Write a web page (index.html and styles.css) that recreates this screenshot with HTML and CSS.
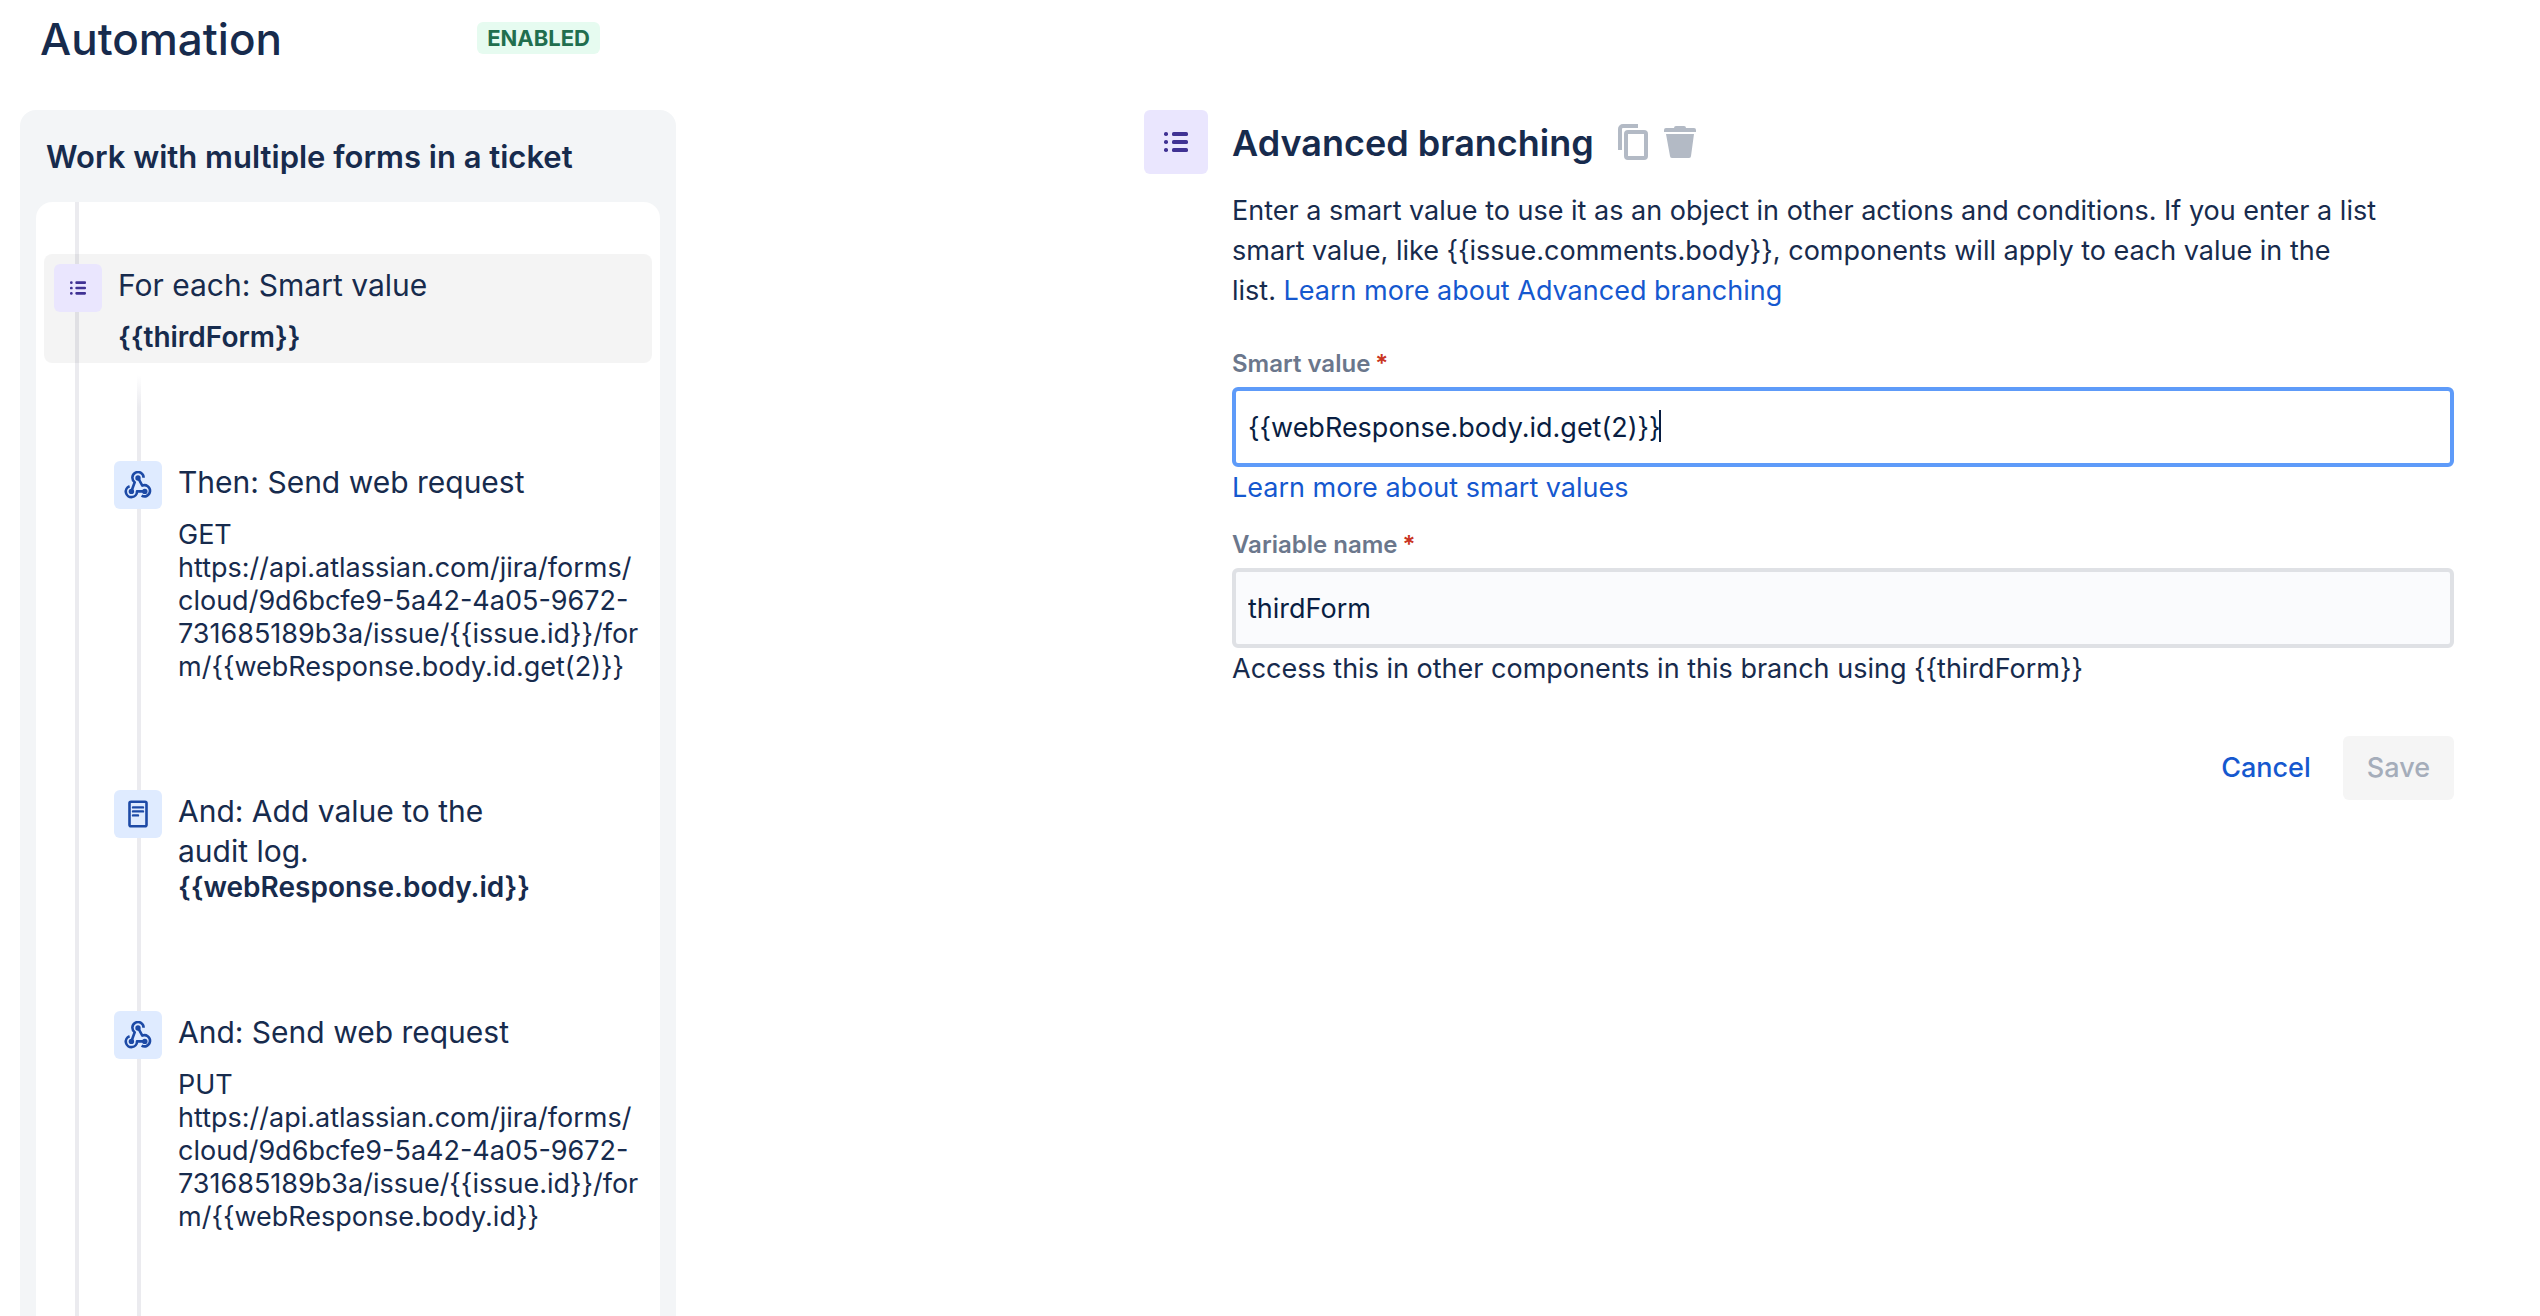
FILE: index.html
```html
<!DOCTYPE html>
<html lang="en">
<head>
<meta charset="utf-8">
<title>Automation</title>
<link rel="stylesheet" href="styles.css">
</head>
<body>
<svg class="sprite" aria-hidden="true">
  <symbol id="icon-list" viewBox="0 0 24 20">
    <g fill="currentColor">
      <rect x="0" y="0" width="4" height="4" rx="1.8"/><rect x="8" y="0" width="16" height="4" rx="1.6"/>
      <rect x="0" y="8" width="4" height="4" rx="1.8"/><rect x="8" y="8" width="16" height="4" rx="1.6"/>
      <rect x="0" y="16" width="4" height="4" rx="1.8"/><rect x="8" y="16" width="16" height="4" rx="1.6"/>
    </g>
  </symbol>
  <symbol id="icon-webhook" viewBox="0 0 28 28">
    <g fill="none" stroke="currentColor" stroke-width="2.6" stroke-linecap="butt" stroke-linejoin="round">
      <path d="M19.6 6.7A5.6 5.6 0 1 0 10.7 11.2L7.6 19.8"/>
      <path d="M14.2 7.2L18.3 14.6A5.6 5.6 0 1 1 17.6 24.6"/>
      <path d="M5.6 15.2A5.6 5.6 0 1 0 13 20.4L21 20.4"/>
    </g>
    <g fill="currentColor"><circle cx="14" cy="7" r="2.7"/><circle cx="7.4" cy="20.4" r="2.7"/><circle cx="20.8" cy="20.4" r="2.7"/></g>
  </symbol>
  <symbol id="icon-log" viewBox="0 0 28 28">
    <rect x="5.5" y="1.8" width="17" height="24.4" rx="1.5" fill="none" stroke="currentColor" stroke-width="2.6"/>
    <path d="M9 7.4h10M9 11.4h10M9 15.4h5" fill="none" stroke="currentColor" stroke-width="2.4" stroke-linecap="round"/>
  </symbol>
</svg>

<header class="page-header">
  <h1 class="page-title">Automation</h1>
  <span class="badge">ENABLED</span>
</header>

<div class="workspace">
  <aside class="rule">
    <h2 class="rule-name">Work with multiple forms in a ticket</h2>
    <div class="rule-body">
      <div class="step step-selected">
        <span class="step-icon branching"><svg class="glyph-s"><use href="#icon-list"/></svg></span>
        <div class="step-text">
          <h3 class="step-title">For each: Smart value</h3>
          <p class="step-detail strong">{{thirdForm}}</p>
        </div>
      </div>
      <div class="branch">
        <div class="step">
          <span class="step-icon action"><svg class="glyph-m"><use href="#icon-webhook"/></svg></span>
          <div class="step-text">
            <h3 class="step-title">Then: Send web request</h3>
            <p class="step-detail">GET<br>https://api.atlassian.com/jira/forms/cloud/9d6bcfe9-5a42-4a05-9672-731685189b3a/issue/{{issue.id}}/form/{{webResponse.body.id.get(2)}}</p>
          </div>
        </div>
        <div class="step">
          <span class="step-icon action"><svg class="glyph-m"><use href="#icon-log"/></svg></span>
          <div class="step-text tight">
            <h3 class="step-title">And: Add value to the audit log.</h3>
            <p class="step-detail strong">{{webResponse.body.id}}</p>
          </div>
        </div>
        <div class="step">
          <span class="step-icon action"><svg class="glyph-m"><use href="#icon-webhook"/></svg></span>
          <div class="step-text">
            <h3 class="step-title">And: Send web request</h3>
            <p class="step-detail">PUT<br>https://api.atlassian.com/jira/forms/cloud/9d6bcfe9-5a42-4a05-9672-731685189b3a/issue/{{issue.id}}/form/{{webResponse.body.id}}</p>
          </div>
        </div>
      </div>
    </div>
  </aside>

  <main class="editor">
    <span class="editor-icon branching"><svg class="glyph-l"><use href="#icon-list"/></svg></span>
    <div class="editor-content">
      <div class="editor-head">
        <h2 class="editor-title">Advanced branching</h2>
        <button class="icon-button" type="button" aria-label="Duplicate">
          <svg class="glyph-tool" viewBox="0 0 32 36"><path d="M3 26V5a3 3 0 0 1 3-3h15" fill="none" stroke="currentColor" stroke-width="4"/><rect x="9" y="8" width="20" height="26" rx="2" fill="none" stroke="currentColor" stroke-width="4"/></svg>
        </button>
        <button class="icon-button" type="button" aria-label="Delete">
          <svg class="glyph-tool" viewBox="0 0 32 36"><g fill="currentColor"><path d="M0 8V6a2 2 0 0 1 2-2h8a2 2 0 0 1 2-2h8a2 2 0 0 1 2 2h8a2 2 0 0 1 2 2v2z"/><path d="M2 10h28l-3 22a2 2 0 0 1-2 2H8a2 2 0 0 1-2-2z"/></g></svg>
        </button>
      </div>
      <p class="editor-copy">Enter a smart value to use it as an object in other actions and conditions. If you enter a list smart value, like {{issue.comments.body}}, components will apply to each value in the list.&nbsp;<a class="link" href="#branching">Learn more about Advanced branching</a></p>
      <form class="fields">
        <div class="field">
          <label class="label" for="smart-value">Smart value<span class="required">*</span></label>
          <div class="control">
            <input class="input focused" id="smart-value" type="text" value="{{webResponse.body.id.get(2)}}">
            <span class="caret"></span>
          </div>
          <p class="help"><a class="link" href="#smart-values">Learn more about smart values</a></p>
        </div>
        <div class="field">
          <label class="label" for="variable-name">Variable name<span class="required">*</span></label>
          <div class="control">
            <input class="input" id="variable-name" type="text" value="thirdForm">
          </div>
          <p class="help">Access this in other components in this branch using {{thirdForm}}</p>
        </div>
        <div class="actions">
          <button class="button cancel" type="button">Cancel</button>
          <button class="button save" type="submit" disabled>Save</button>
        </div>
      </form>
    </div>
  </main>
</div>
</body>
</html>
```
FILE: styles.css
```css
* { box-sizing: border-box; }

body {
  margin: 0;
  min-height: 100vh;
  display: flex;
  flex-direction: column;
  background: #fff;
  color: #172b4d;
  font: 400 27px/40px Inter, "Liberation Sans", sans-serif;
}

h1, h2, h3, p { margin: 0; }

.sprite { display: none; }

.page-header {
  display: flex;
  justify-content: space-between;
  align-items: flex-start;
  width: 600px;
  height: 110px;
  padding: 15px 0 0 40px;
}

.page-title { font-size: 44px; line-height: 48px; font-weight: 500; }

.badge {
  margin-top: 7px;
  padding: 0 10px;
  border-radius: 6px;
  background: #e6fbf0;
  color: #216e4e;
  font-size: 22px;
  line-height: 32px;
  font-weight: 700;
}

.workspace {
  flex: 1;
  display: flex;
  justify-content: space-between;
  gap: 48px;
  padding: 0 86px 0 20px;
}

.rule {
  flex: 0 0 656px;
  display: flex;
  flex-direction: column;
  padding: 28px 16px 0;
  border-radius: 16px 16px 0 0;
  background: #f3f5f7;
}

.rule-name {
  padding: 0 10px 26px;
  font-size: 31px;
  line-height: 38px;
  font-weight: 600;
}

.rule-body {
  flex: 1;
  display: flex;
  flex-direction: column;
  padding: 52px 8px 0;
  border-radius: 16px 16px 0 0;
  background: linear-gradient(#ebebef, #ebebef) 39px 0 / 4px 100% no-repeat #fff;
}

.step { display: flex; align-items: flex-start; gap: 16px; }

.step-selected {
  padding: 10px 10px 9px;
  border-radius: 8px;
  background: rgba(0, 0, 0, .043);
}

.step-icon, .editor-icon {
  flex: none;
  display: flex;
  align-items: center;
  justify-content: center;
}

.step-icon { width: 48px; height: 48px; border-radius: 6px; }
.editor-icon { width: 64px; height: 64px; border-radius: 6px; }

.branching { background: #eae6fe; color: #403294; }
.action { background: #dfebff; color: #1d4aa6; }

.glyph-s { width: 16px; height: 14px; }
.glyph-m { width: 28px; height: 28px; }
.glyph-l { width: 24px; height: 20px; }

.step-text {
  flex: 1;
  min-width: 0;
  display: flex;
  flex-direction: column;
  gap: 16px;
  padding: 1px 8px 0 0;
}

.tight { gap: 0; }

.step-title { max-width: 360px; font-size: 30px; line-height: 40px; font-weight: 400; }

.step-detail { line-height: 33px; overflow-wrap: anywhere; }

.strong { font-size: 28px; font-weight: 600; }

.branch {
  flex: 1;
  display: flex;
  flex-direction: column;
  gap: 107px;
  margin: 12px 0 0 70px;
  padding-top: 86px;
  padding-bottom: 48px;
  background: linear-gradient(transparent, #ebebef 32px) 23px 0 / 4px 100% no-repeat;
}

.editor {
  flex: 0 1 1310px;
  display: flex;
  align-items: flex-start;
  gap: 24px;
}

.editor-content { flex: 1; min-width: 0; }

.editor-head { display: flex; align-items: center; gap: 15px; height: 64px; }

.editor-title { padding: 2px 8px 0 0; font-size: 36px; line-height: 44px; font-weight: 600; }

.icon-button {
  display: flex;
  padding: 0;
  border: 0;
  background: none;
  color: #b3bac5;
}

.glyph-tool { width: 32px; height: 36px; }

.editor-copy { margin-top: 17px; }

.link { color: #1558cf; text-decoration: none; }

.fields { display: flex; flex-direction: column; gap: 21px; margin-top: 37px; }

.label {
  display: block;
  margin-bottom: 7px;
  color: #6b778c;
  font-size: 24px;
  line-height: 32px;
  font-weight: 600;
}

.required { margin-left: 5px; color: #ca3521; }

.control { position: relative; }

.input {
  display: block;
  width: 100%;
  height: 80px;
  padding: 0 12px;
  border: 4px solid #dfe1e5;
  border-radius: 6px;
  background: #fafbfd;
  color: #091e42;
  font: inherit;
}

.focused { border-color: #5e9bf9; background: #fff; outline: 0; }

.caret {
  position: absolute;
  left: 427px;
  top: 23px;
  width: 2px;
  height: 32px;
  background: #091e42;
}

.help { margin-top: 1px; }

.actions { display: flex; justify-content: flex-end; gap: 8px; margin-top: 26px; }

.button {
  height: 64px;
  padding: 0 24px;
  border: 0;
  border-radius: 6px;
  font: inherit;
  font-weight: 500;
}

.cancel { background: none; color: #1558cf; }
.save { background: #f5f5f5; color: #a5adba; }
```
